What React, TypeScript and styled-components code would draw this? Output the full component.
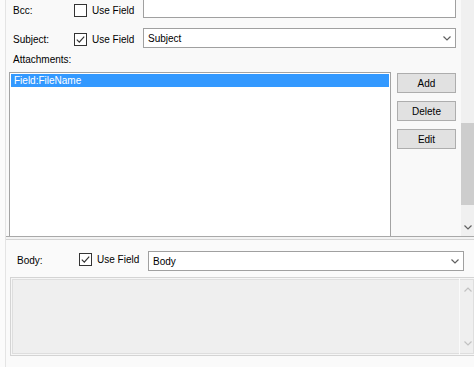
import React from 'react';
import styled, { createGlobalStyle } from 'styled-components';

const GlobalStyle = createGlobalStyle`
  html, body {
    margin: 0;
    padding: 0;
    background: #fbfbfb;
  }
  body {
    font-family: 'Liberation Sans', Arial, sans-serif;
    font-size: 10px;
    color: #000;
  }
`;

const Window = styled.div`
  width: 474px;
  height: 367px;
  overflow: hidden;
  padding-left: 5px;
  box-sizing: border-box;
  display: flex;
`;

const Frame = styled.div`
  flex: 1;
  min-width: 0;
  display: flex;
  flex-direction: column;
  border-left: 1px solid #e4e4e4;
  background: #f9f9f9;
  overflow: hidden;
`;

const TopPanel = styled.div`
  height: 236px;
  flex-shrink: 0;
  display: flex;
  overflow: hidden;
`;

const TopContent = styled.div`
  flex: 0 0 455px;
  box-sizing: border-box;
  margin-top: -2px;
  padding: 0 5px 0 3px;
  display: flex;
  flex-direction: column;
`;

const Row = styled.div<{ $gap?: number }>`
  display: flex;
  align-items: flex-start;
  height: 20px;
  margin-top: ${p => p.$gap ?? 0}px;
`;

const LabelCell = styled.div<{ $inset: number; $width: number; $indent: number }>`
  width: ${p => p.$width}px;
  flex-shrink: 0;
  box-sizing: border-box;
  padding: ${p => p.$inset}px 0 0 ${p => p.$indent}px;
  line-height: 13px;
`;

const CheckCell = styled.label<{ $inset: number }>`
  width: 69px;
  flex-shrink: 0;
  display: flex;
  align-items: center;
  gap: 5px;
  padding-top: ${p => p.$inset}px;
  line-height: 13px;
`;

const CheckBox = styled.span`
  width: 13px;
  height: 13px;
  box-sizing: border-box;
  border: 1px solid #333;
  background: #fff;
  display: flex;
  align-items: center;
  justify-content: center;
  flex-shrink: 0;
`;

const Field = styled.div`
  flex: 1;
  height: 20px;
  box-sizing: border-box;
  border: 1px solid #a0a0a0;
  background: #fff;
  display: flex;
  align-items: center;
  justify-content: space-between;
  padding: 0 4px 0 4px;
`;

const SectionLabel = styled.div`
  height: 12px;
  line-height: 12px;
  margin-top: 6px;
  padding-left: 4px;
`;

const ListRow = styled.div`
  flex: 1;
  display: flex;
  gap: 6px;
  margin-top: 6px;
  min-height: 0;
`;

const ListBox = styled.div`
  width: 382px;
  box-sizing: border-box;
  border: 1px solid #a3a3a3;
  border-bottom: none;
  background: #fff;
  padding: 1px 1px 0 1px;
`;

const ListItem = styled.div<{ $selected?: boolean }>`
  height: 13px;
  line-height: 13px;
  padding-left: 3px;
  background: ${p => (p.$selected ? '#3399ff' : 'transparent')};
  color: ${p => (p.$selected ? '#fff' : '#000')};
`;

const ButtonColumn = styled.div`
  width: 59px;
  display: flex;
  flex-direction: column;
  gap: 8px;
  padding-top: 1px;
`;

const Button = styled.button`
  height: 20px;
  box-sizing: border-box;
  border: 1px solid #adadad;
  background: #e1e1e1;
  font-family: inherit;
  font-size: 10px;
  color: #000;
  padding: 0;
`;

const ScrollBar = styled.div`
  flex: 0 0 13px;
  background: #f0f0f0;
  display: flex;
  flex-direction: column;
`;

const Thumb = styled.div`
  margin-top: 123px;
  height: 82px;
  background: #cdcdcd;
`;

const ScrollSpacer = styled.div`
  flex: 1;
`;

const ArrowBox = styled.div`
  height: 17px;
  display: flex;
  align-items: center;
  justify-content: center;
`;

const Splitter = styled.div`
  height: 4px;
  flex-shrink: 0;
  box-sizing: border-box;
  border-top: 1px solid #a9a9a9;
  border-bottom: 1px solid #d4d4d4;
  background: #f3f3f3;
`;

const BottomPanel = styled.div`
  flex: 1;
  display: flex;
  flex-direction: column;
  padding: 11px 10px 0 4px;
  background: #fafafa;
`;

const BodyBox = styled.div`
  height: 79px;
  margin: 6px -12px 0 0;
  box-sizing: border-box;
  border: 1px solid #d4d4d4;
  box-shadow: inset 0 0 0 1px #f6f6f6, inset 0 0 0 2px #dedede;
  background: #efefef;
  display: flex;
`;

const BodyText = styled.div`
  flex: 1;
`;

const BodyScroll = styled.div`
  width: 15px;
  border-left: 1px solid #fafafa;
  display: flex;
  flex-direction: column;
  justify-content: space-between;
  padding: 3px 0 3px;
`;

const Chevron = ({ up = false, color = '#606060' }: { up?: boolean; color?: string }) => (
  <svg width="8" height="5" viewBox="0 0 8 5">
    <path
      d={up ? 'M0.5 4.5 L4 1 L7.5 4.5' : 'M0.5 0.5 L4 4 L7.5 0.5'}
      fill="none"
      stroke={color}
      strokeWidth="1.2"
    />
  </svg>
);

const Check = ({ checked }: { checked: boolean }) => (
  <CheckBox>
    {checked && (
      <svg width="11" height="11" viewBox="0 0 11 11">
        <path d="M1.8 5.6 L4.3 8.1 L9.2 2.6" fill="none" stroke="#333" strokeWidth="1.2" />
      </svg>
    )}
  </CheckBox>
);

const App: React.FC = () => {
  return (
    <Window>
      <GlobalStyle />
      <Frame>
        <TopPanel>
          <TopContent>
            <Row>
              <LabelCell $inset={6} $width={65} $indent={4}>Bcc:</LabelCell>
              <CheckCell $inset={6}>
                <Check checked={false} />
                Use Field
              </CheckCell>
              <Field />
            </Row>
            <Row $gap={10}>
              <LabelCell $inset={5} $width={65} $indent={4}>Subject:</LabelCell>
              <CheckCell $inset={5}>
                <Check checked />
                Use Field
              </CheckCell>
              <Field>
                <span>Subject</span>
                <Chevron />
              </Field>
            </Row>
            <SectionLabel>Attachments:</SectionLabel>
            <ListRow>
              <ListBox>
                <ListItem $selected>Field:FileName</ListItem>
              </ListBox>
              <ButtonColumn>
                <Button>Add</Button>
                <Button>Delete</Button>
                <Button>Edit</Button>
              </ButtonColumn>
            </ListRow>
          </TopContent>
          <ScrollBar>
            <Thumb />
            <ScrollSpacer />
            <ArrowBox>
              <Chevron />
            </ArrowBox>
          </ScrollBar>
        </TopPanel>
        <Splitter />
        <BottomPanel>
          <Row>
            <LabelCell $inset={3} $width={69} $indent={7}>Body:</LabelCell>
            <CheckCell $inset={2}>
              <Check checked />
              Use Field
            </CheckCell>
            <Field>
              <span>Body</span>
              <Chevron />
            </Field>
          </Row>
          <BodyBox>
            <BodyText />
            <BodyScroll>
              <ArrowBox>
                <Chevron up color="#c2c2c2" />
              </ArrowBox>
              <ArrowBox>
                <Chevron color="#c2c2c2" />
              </ArrowBox>
            </BodyScroll>
          </BodyBox>
        </BottomPanel>
      </Frame>
    </Window>
  );
};

export default App;
